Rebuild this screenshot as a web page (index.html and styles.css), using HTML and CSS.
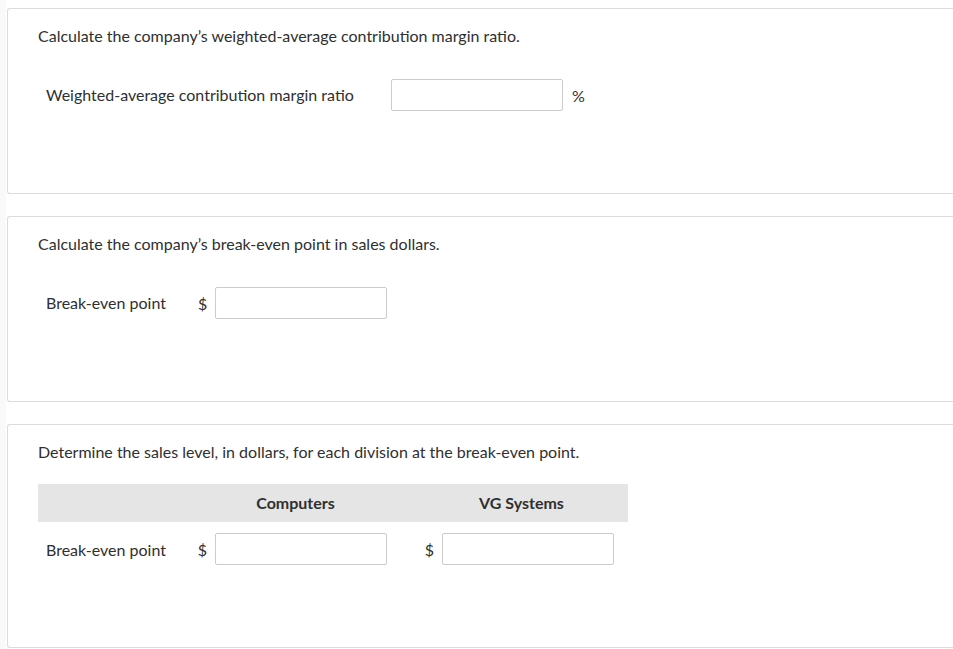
FILE: index.html
```html
<!DOCTYPE html>
<html>
<head>
<meta charset="utf-8">
<link rel="stylesheet" href="styles.css">
</head>
<body>
<div class="page">
  <div class="rail"></div>
  <main class="main">
    <section class="card card-short">
      <p class="prompt">Calculate the company’s weighted-average contribution margin ratio.</p>
      <div class="row">
        <span class="label label-wide">Weighted-average contribution margin ratio</span>
        <span class="field"></span>
        <span class="unit">%</span>
      </div>
    </section>
    <section class="card card-short">
      <p class="prompt">Calculate the company’s break-even point in sales dollars.</p>
      <div class="row">
        <span class="label label-narrow">Break-even point</span>
        <span class="cur">$</span>
        <span class="field"></span>
      </div>
    </section>
    <section class="card card-tall">
      <p class="prompt">Determine the sales level, in dollars, for each division at the break-even point.</p>
      <div class="table">
        <div class="th"></div>
        <div class="th th-c2">Computers</div>
        <div class="th th-c3">VG Systems</div>
        <div class="td td-label">Break-even point</div>
        <div class="td td-in"><span class="cur">$</span><span class="field"></span></div>
        <div class="td td-in"><span class="cur">$</span><span class="field"></span></div>
      </div>
    </section>
  </main>
</div>
</body>
</html>
```
FILE: styles.css
```css
html, body {
  margin: 0;
  padding: 0;
  background: #ffffff;
}
body {
  font-family: Lato, "Open Sans", sans-serif;
  font-size: 16px;
  color: #2f2f2f;
}
.page {
  display: flex;
  min-height: 649px;
  overflow: hidden;
}
.rail {
  width: 6px;
  flex: 0 0 6px;
  background: #f9f9f9;
}
.main {
  flex: 1;
  padding-top: 8px;
  padding-left: 1px;
  display: flex;
  flex-direction: column;
  gap: 22px;
}
.card {
  box-sizing: border-box;
  border: 1px solid #dcdcdc;
  border-right: none;
  border-radius: 3px 0 0 3px;
  padding: 17px 0 0 30px;
  width: calc(100% + 4px);
}
.card-short { height: 186px; }
.card-tall { height: 224px; }
.prompt {
  margin: 0;
  line-height: 20px;
}
.row {
  display: flex;
  align-items: center;
  margin-top: 33px;
  padding-left: 8px;
  height: 32px;
}
.label { line-height: 20px; }
.label-wide { width: 345px; }
.label-narrow { width: 152px; }
.field {
  box-sizing: border-box;
  display: block;
  width: 172px;
  height: 32px;
  border: 1px solid #cccccc;
  border-radius: 2px;
  background: #fff;
}
.unit { margin-left: 9px; }
.cur { margin-right: 8px; }
.table {
  margin-top: 22px;
  width: 590px;
  display: grid;
  grid-template-columns: 152px 211px 227px;
}
.th {
  background: #e5e5e5;
  height: 38px;
  line-height: 38px;
  font-weight: bold;
  text-align: center;
}
.th-c3 { padding-left: 14px; }
.td {
  margin-top: 11px;
  height: 32px;
  display: flex;
  align-items: center;
}
.td-label { padding-left: 8px; }
.td-in {
  justify-content: flex-end;
  padding-right: 14px;
}
```
